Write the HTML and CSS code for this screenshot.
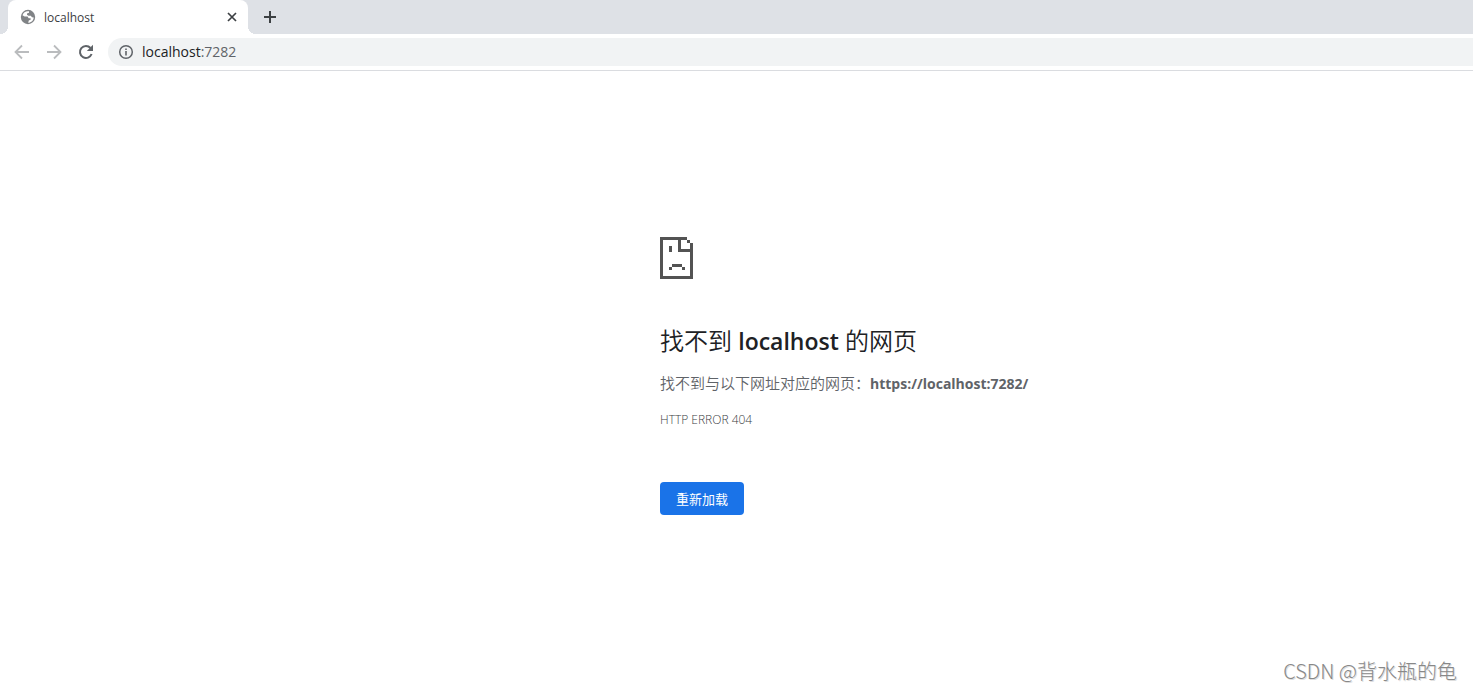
FILE: index.html
```html
<!DOCTYPE html>
<html lang="zh-CN">
<head>
<meta charset="utf-8">
<title>localhost</title>
<link rel="stylesheet" href="styles.css">
</head>
<body>
<header class="browser">
  <div class="tab-strip">
    <div class="tab">
      <svg class="icon globe" viewBox="0 0 16 16" aria-hidden="true"><circle cx="8" cy="8" r="7.2" fill="#808386"/><path d="M9 2.3C6 1.8 3.4 3.4 2.5 6.2L4.6 7.4H7.6L8.6 9.2H10.6V10.8L8.8 11.6 8.2 13.7C11.2 13.6 13.6 11.2 13.7 8.4L12 8.2 10.8 6.8H8.4L7 5.8V4.4L9 3.8Z" fill="#fff"/></svg>
      <span class="tab-title">localhost</span>
      <button class="icon-button close" aria-label="关闭标签页"><svg class="icon" viewBox="0 0 16 16"><path d="M4 4L12 12M12 4L4 12" fill="none" stroke="#3c4043" stroke-width="1.7"/></svg></button>
    </div>
    <button class="icon-button new-tab" aria-label="新标签页"><svg class="icon" viewBox="0 0 16 16"><path d="M8 2V14M2 8H14" fill="none" stroke="#3c4043" stroke-width="2"/></svg></button>
  </div>
  <nav class="toolbar">
    <button class="icon-button" aria-label="后退" disabled><svg class="icon" viewBox="0 0 16 16"><path d="M15 8H2M8 1.5L1.5 8 8 14.5" fill="none" stroke="#babcbe" stroke-width="1.8"/></svg></button>
    <button class="icon-button" aria-label="前进" disabled><svg class="icon" viewBox="0 0 16 16"><path d="M1 8H14M8 1.5L14.5 8 8 14.5" fill="none" stroke="#babcbe" stroke-width="1.8"/></svg></button>
    <button class="icon-button" aria-label="重新加载此页"><svg class="icon" viewBox="0 0 16 16"><path d="M13.6 10A6 6 0 1 1 12.5 4" fill="none" stroke="#5f6368" stroke-width="2"/><path d="M15 .8V7H8.8Z" fill="#5f6368"/></svg></button>
    <div class="address">
      <svg class="icon" viewBox="0 0 16 16" aria-hidden="true"><circle cx="8" cy="8" r="6.3" fill="none" stroke="#5f6368" stroke-width="1.5"/><path d="M8 7V11.5M8 4.5V6" stroke="#5f6368" stroke-width="1.6"/></svg>
      <span class="url"><span class="host">localhost</span>:7282</span>
    </div>
  </nav>
</header>
<main class="error-page">
  <section class="error">
    <svg class="sad-page" viewBox="0 0 33 42" shape-rendering="crispEdges" aria-hidden="true"><path fill="#535353" d="M0 0H27V3H30V6H33V42H0ZM3 3V39H30V15H18V3ZM21 3V12H30V6H27V3ZM9 9H12V15H9ZM12 27H22V30H12ZM9 30H12V33H9ZM22 30H25V33H22Z" fill-rule="evenodd"/></svg>
    <h1 class="title">找不到 <span class="title-host">localhost</span> 的网页</h1>
    <p class="message">找不到与以下网址对应的网页：<strong>https://localhost:7282/</strong></p>
    <p class="code">HTTP ERROR 404</p>
    <button class="reload">重新加载</button>
  </section>
</main>
<footer class="watermark">CSDN @背水瓶的龟</footer>
</body>
</html>
```
FILE: styles.css
```css
* { box-sizing: border-box; }
body {
  margin: 0;
  min-height: 100vh;
  display: flex;
  flex-direction: column;
  background: #fff;
  color: #5f6368;
  font-family: "Open Sans", "Noto Sans CJK SC", sans-serif;
}
.icon { display: block; width: 16px; height: 16px; flex: none; }
.icon-button {
  display: grid;
  place-items: center;
  width: 16px;
  height: 16px;
  padding: 0;
  border: 0;
  background: none;
}
.tab-strip {
  display: flex;
  align-items: center;
  height: 34px;
  padding-left: 8px;
  background: #dee1e6;
}
.tab {
  position: relative;
  display: flex;
  align-items: center;
  gap: 8px;
  width: 240px;
  height: 34px;
  padding: 0 8px 0 12px;
  border-radius: 8px 8px 0 0;
  background: #fff;
}
.tab::before, .tab::after {
  content: "";
  position: absolute;
  bottom: 0;
  width: 8px;
  height: 8px;
}
.tab::before { right: 100%; background: radial-gradient(circle at 0 0, transparent 8px, #fff 8px); }
.tab::after { left: 100%; background: radial-gradient(circle at 100% 0, transparent 8px, #fff 8px); }
.tab-title { flex: 1; font-size: 12px; color: #3c4043; }
.new-tab { margin-left: 14px; }
.toolbar {
  display: flex;
  align-items: center;
  gap: 16px;
  height: 37px;
  padding: 0 0 1px 14px;
  border-bottom: 1px solid #dadce0;
}
.address {
  flex: 1;
  display: flex;
  align-items: center;
  gap: 8px;
  height: 28px;
  margin-left: -2px;
  padding-left: 10px;
  border-radius: 14px 0 0 14px;
  background: #f1f3f4;
}
.url { font-size: 14px; line-height: 20px; }
.host { color: #202124; }
.error-page { flex: 1; display: flex; justify-content: center; padding: 166px 16px 0; }
.error { width: 153px; white-space: nowrap; }
.sad-page { display: block; width: 33px; height: 42px; }
.title {
  margin: 44px 0 0;
  font-size: 24px;
  line-height: 36px;
  font-weight: 350;
  color: #202124;
}
.title-host { font-size: 23px; font-weight: 600; }
.message { margin: 12px 0 0; font-size: 15px; line-height: 24px; font-weight: 350; }
.message strong { font-size: 14px; font-weight: 700; }
.code { margin: 14px 0 0; font-size: 12px; line-height: 20px; font-weight: 300; color: #3c4043; }
.reload {
  height: 33px;
  margin: 52px 0 0;
  padding: 0 16px;
  border: 0;
  border-radius: 4px;
  background: #1a73e8;
  color: #fff;
  font: 13px "Noto Sans CJK SC", sans-serif;
}
.watermark {
  padding: 0 16px 4px;
  text-align: right;
  font: 300 20px/30px "Noto Sans CJK SC", sans-serif;
  color: #888;
  text-shadow: 1px 1px 0 #ddd;
}
```
